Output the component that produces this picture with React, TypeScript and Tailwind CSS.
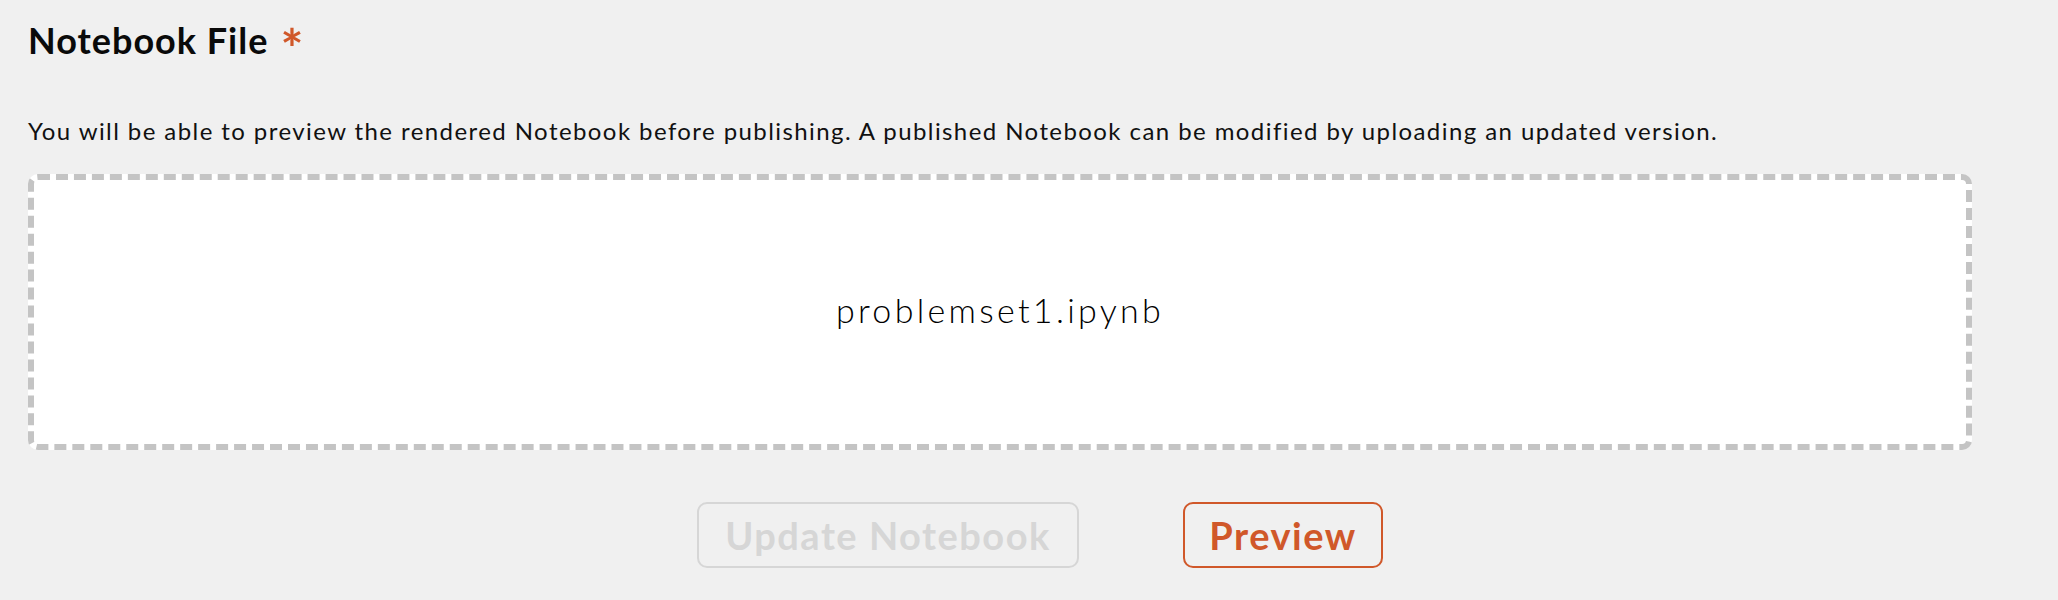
export default function App() {
    return (
        <div className="min-h-[600px] bg-[#f0f0f0] px-[28px] pt-[22px] font-['Lato','Noto_Sans',sans-serif] text-[#111111]">
            <h2 className="flex items-start text-[36px] leading-[36px] font-bold tracking-[1px] text-[#0a0a0a]">
                Notebook File
                <span className="ml-[12px] mt-[8px] text-[54px] leading-[36px] text-[#d0582a]">*</span>
            </h2>
            <p className="mt-[53px] text-[24px] leading-[24px] font-normal tracking-[1.42px] text-[#111111]">
                You will be able to preview the rendered Notebook before publishing. A published Notebook can be modified by uploading an updated version.
            </p>
            <div className="mt-[31px] flex h-[276px] w-[1944px] items-center justify-center rounded-[10px] border-[6px] border-dashed border-[#c4c4c4] bg-white">
                <span className="mb-[5px] text-[34px] font-light tracking-[3.3px] text-[#000000]">
                    problemset1.ipynb
                </span>
            </div>
            <div className="mt-[52px] flex w-[1944px] justify-center gap-[104px] pl-[80px]">
                <button
                    disabled
                    className="h-[66px] w-[382px] rounded-[10px] border-2 border-[#d6d6d6] text-[38px] font-bold tracking-[1.5px] text-[#d6d6d6]"
                >
                    Update Notebook
                </button>
                <button className="h-[66px] w-[200px] rounded-[10px] border-2 border-[#d0582a] text-[38px] font-bold tracking-[1.5px] text-[#d0582a]">
                    Preview
                </button>
            </div>
        </div>
    )
}
